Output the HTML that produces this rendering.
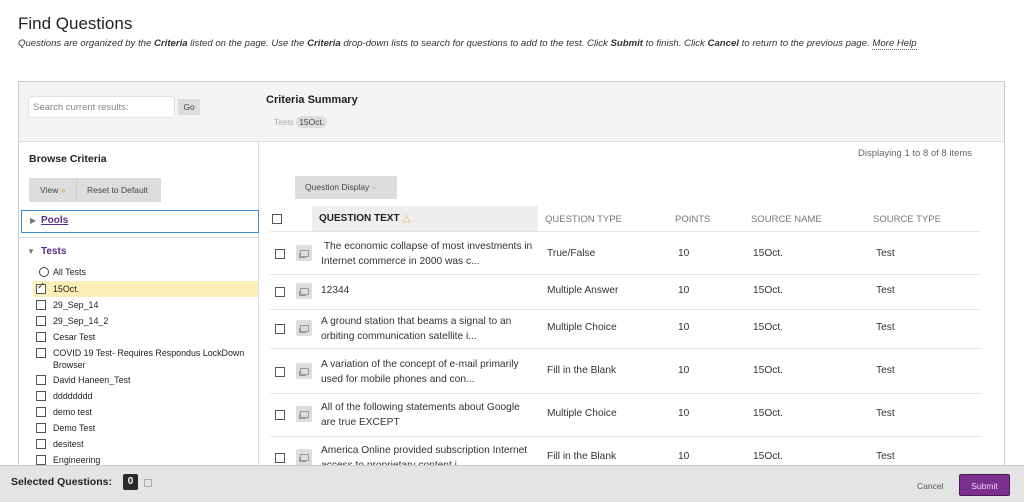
<!DOCTYPE html>
<html><head><meta charset="utf-8"><style>
*{box-sizing:border-box;margin:0;padding:0}
html,body{width:1024px;height:502px;overflow:hidden}
body{background:#fff;font-family:"Liberation Sans",sans-serif;color:#333;position:relative}
.a{position:absolute;white-space:nowrap}
.cb{position:absolute;width:10px;height:10px;border:1px solid #555;background:#fff}
.ic{position:absolute;width:16px;height:16px;background:#ddd;border-radius:2px}
.ic:after{content:"";position:absolute;left:4px;top:5px;width:7px;height:5px;border:1px solid #999;box-shadow:-2px 2px 0 -1px #999}
.t{font-size:10.2px;color:#333}
.lt{font-size:8.9px;color:#222}
.hl{position:absolute;left:270px;width:711px;height:1px;background:#e6e6e6}
</style></head><body>
<div class="a" style="left:18px;top:14px;font-size:17px;color:#222">Find Questions</div>
<div class="a" style="left:18px;top:38px;font-size:9.6px;font-style:italic;color:#333">Questions are organized by the <b>Criteria</b> listed on the page. Use the <b>Criteria</b> drop-down lists to search for questions to add to the test. Click <b>Submit</b> to finish. Click <b>Cancel</b> to return to the previous page. <span style="border-bottom:1px dotted #666">More Help</span></div>

<div class="a" style="left:18px;top:81px;width:987px;height:421px;border:1px solid #ccc"></div>
<div class="a" style="left:19px;top:82px;width:985px;height:60px;background:#f4f4f4;border-bottom:1px solid #ddd"></div>
<div class="a" style="left:28px;top:96px;width:147px;height:22px;background:#fff;border:1px solid #e2e2e2;border-radius:3px;font-size:9.5px;color:#888;padding:5px 4px">Search current results:</div>
<div class="a" style="left:178px;top:99px;width:22px;height:16px;background:#ddd;font-size:8.5px;color:#444;text-align:center;padding-top:3px">Go</div>
<div class="a" style="left:266px;top:94px;font-size:11px;font-weight:bold;color:#222">Criteria Summary</div>
<div class="a" style="left:274px;top:117px;font-size:8.5px;color:#aaa">Tests <span style="background:#ddd;color:#444;border-radius:7px;padding:1px 3px">15Oct.</span></div>

<div class="a" style="left:258px;top:142px;width:1px;height:325px;background:#ddd"></div>
<div class="a" style="left:29px;top:153px;font-size:10.5px;font-weight:bold;color:#222">Browse Criteria</div>
<div class="a" style="left:29px;top:178px;width:132px;height:24px;background:#ddd"></div>
<div class="a" style="left:40px;top:185px;font-size:8.5px;color:#444">View <span style="color:#d9a300">»</span></div>
<div class="a" style="left:76px;top:178px;width:1px;height:24px;background:#ccc"></div>
<div class="a" style="left:87px;top:185px;font-size:8.5px;color:#444">Reset to Default</div>
<div class="a" style="left:21px;top:210px;width:238px;height:23px;border:1px solid #3a8fd6"></div>
<div class="a" style="left:30px;top:216px;font-size:8px;color:#777">▶</div>
<div class="a" style="left:41px;top:215px;font-size:10px;font-weight:bold;color:#5a2d82;text-decoration:underline">Pools</div>
<div class="a" style="left:19px;top:237px;width:239px;height:1px;background:#ddd"></div>
<div class="a" style="left:27px;top:247px;font-size:8px;color:#777">▼</div>
<div class="a" style="left:41px;top:246px;font-size:10px;font-weight:bold;color:#5a2d82">Tests</div>
<div class="a" style="left:39px;top:267px;width:10px;height:10px;border:1px solid #444;border-radius:50%"></div>
<div class="a lt" style="left:53px;top:267px">All Tests</div>
<div class="a" style="left:33px;top:281px;width:225px;height:16px;background:#fbeeb8"></div>
<div class="cb" style="left:36px;top:284px"></div><div class="a" style="left:37px;top:281px;font-size:10px;line-height:12px;color:#444">✓</div>
<div class="a lt" style="left:53px;top:284px">15Oct.</div>
<div class="cb" style="left:36px;top:300px"></div><div class="a lt" style="left:53px;top:300px">29_Sep_14</div>
<div class="cb" style="left:36px;top:316px"></div><div class="a lt" style="left:53px;top:316px">29_Sep_14_2</div>
<div class="cb" style="left:36px;top:332px"></div><div class="a lt" style="left:53px;top:332px">Cesar Test</div>
<div class="cb" style="left:36px;top:348px"></div><div class="a lt" style="left:53px;top:347px;line-height:12px">COVID 19 Test- Requires Respondus LockDown<br>Browser</div>
<div class="cb" style="left:36px;top:375px"></div><div class="a lt" style="left:53px;top:375px">David Haneen_Test</div>
<div class="cb" style="left:36px;top:391px"></div><div class="a lt" style="left:53px;top:391px">dddddddd</div>
<div class="cb" style="left:36px;top:407px"></div><div class="a lt" style="left:53px;top:407px">demo test</div>
<div class="cb" style="left:36px;top:423px"></div><div class="a lt" style="left:53px;top:423px">Demo Test</div>
<div class="cb" style="left:36px;top:439px"></div><div class="a lt" style="left:53px;top:439px">desitest</div>
<div class="cb" style="left:36px;top:455px"></div><div class="a lt" style="left:53px;top:455px">Engineering</div>

<div class="a" style="left:858px;top:148px;font-size:9.5px;color:#666">Displaying 1 to 8 of 8 items</div>
<div class="a" style="left:295px;top:176px;width:102px;height:23px;background:#ddd;font-size:8.5px;color:#444;padding:6px 10px">Question Display <span style="color:#bbb">»</span></div>
<div class="a" style="left:312px;top:206px;width:226px;height:25px;background:#eee"></div>
<div class="cb" style="left:272px;top:214px"></div>
<div class="a" style="left:319px;top:213px;font-size:10px;font-weight:bold;color:#222">QUESTION TEXT <span style="color:#d9c06a;font-weight:normal">△</span></div>
<div class="a" style="left:545px;top:214px;font-size:9.5px;color:#777">QUESTION TYPE</div>
<div class="a" style="left:675px;top:214px;font-size:9.5px;color:#777">POINTS</div>
<div class="a" style="left:751px;top:214px;font-size:9.5px;color:#777">SOURCE NAME</div>
<div class="a" style="left:873px;top:214px;font-size:9.5px;color:#777">SOURCE TYPE</div>
<div class="hl" style="top:231px"></div>

<div class="cb" style="left:275px;top:249px"></div><div class="ic" style="left:296px;top:245px"></div>
<div class="a t" style="left:321px;top:239px;line-height:15px">&nbsp;The economic collapse of most investments in<br>Internet commerce in 2000 was c...</div>
<div class="a t" style="left:547px;top:248px">True/False</div><div class="a t" style="left:678px;top:248px">10</div><div class="a t" style="left:753px;top:248px">15Oct.</div><div class="a t" style="left:876px;top:248px">Test</div>
<div class="hl" style="top:274px"></div>

<div class="cb" style="left:275px;top:287px"></div><div class="ic" style="left:296px;top:283px"></div>
<div class="a t" style="left:321px;top:285px">12344</div>
<div class="a t" style="left:547px;top:285px">Multiple Answer</div><div class="a t" style="left:678px;top:285px">10</div><div class="a t" style="left:753px;top:285px">15Oct.</div><div class="a t" style="left:876px;top:285px">Test</div>
<div class="hl" style="top:309px"></div>

<div class="cb" style="left:275px;top:324px"></div><div class="ic" style="left:296px;top:320px"></div>
<div class="a t" style="left:321px;top:314px;line-height:15px">A ground station that beams a signal to an<br>orbiting communication satellite i...</div>
<div class="a t" style="left:547px;top:322px">Multiple Choice</div><div class="a t" style="left:678px;top:322px">10</div><div class="a t" style="left:753px;top:322px">15Oct.</div><div class="a t" style="left:876px;top:322px">Test</div>
<div class="hl" style="top:348px"></div>

<div class="cb" style="left:275px;top:367px"></div><div class="ic" style="left:296px;top:363px"></div>
<div class="a t" style="left:321px;top:357px;line-height:15px">A variation of the concept of e-mail primarily<br>used for mobile phones and con...</div>
<div class="a t" style="left:547px;top:365px">Fill in the Blank</div><div class="a t" style="left:678px;top:365px">10</div><div class="a t" style="left:753px;top:365px">15Oct.</div><div class="a t" style="left:876px;top:365px">Test</div>
<div class="hl" style="top:393px"></div>

<div class="cb" style="left:275px;top:410px"></div><div class="ic" style="left:296px;top:406px"></div>
<div class="a t" style="left:321px;top:400px;line-height:15px">All of the following statements about Google<br>are true EXCEPT</div>
<div class="a t" style="left:547px;top:408px">Multiple Choice</div><div class="a t" style="left:678px;top:408px">10</div><div class="a t" style="left:753px;top:408px">15Oct.</div><div class="a t" style="left:876px;top:408px">Test</div>
<div class="hl" style="top:436px"></div>

<div class="cb" style="left:275px;top:453px"></div><div class="ic" style="left:296px;top:449px"></div>
<div class="a t" style="left:321px;top:443px;line-height:15px">America Online provided subscription Internet<br>access to proprietary content i</div>
<div class="a t" style="left:547px;top:451px">Fill in the Blank</div><div class="a t" style="left:678px;top:451px">10</div><div class="a t" style="left:753px;top:451px">15Oct.</div><div class="a t" style="left:876px;top:451px">Test</div>

<div class="a" style="left:0;top:465px;width:1024px;height:37px;background:#e4e4e4;border-top:1px solid #c8c8c8"></div>
<div class="a" style="left:11px;top:476px;font-size:10.5px;font-weight:bold;color:#222">Selected Questions:</div>
<div class="a" style="left:123px;top:474px;width:15px;height:16px;background:#2a2a2a;border-radius:2px;color:#fff;font-size:10px;font-weight:bold;text-align:center;padding-top:2px">0</div>
<div class="a" style="left:144px;top:479px;width:8px;height:8px;border:1px solid #aaa"></div>
<div class="a" style="left:917px;top:481px;font-size:8.5px;color:#555">Cancel</div>
<div class="a" style="left:959px;top:474px;width:51px;height:22px;background:#7b2f8f;border:1px solid #4a1a57;border-radius:2px;color:#f0d8f5;font-size:8.5px;text-align:center;padding-top:6px">Submit</div>
</body></html>
